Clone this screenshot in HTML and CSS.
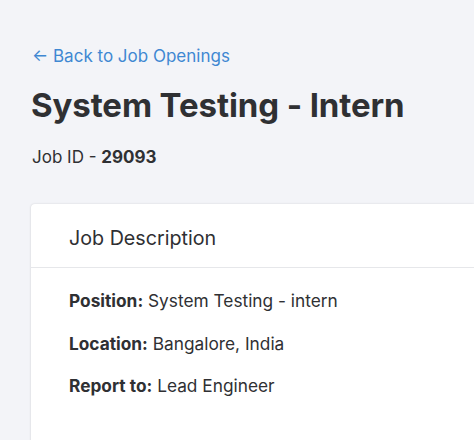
FILE: index.html
```html
<!DOCTYPE html>
<html>
<head>
<meta charset="utf-8">
<link rel="stylesheet" href="styles.css">
</head>
<body>
<main class="page">
  <a class="back" href="#">&larr; Back to Job Openings</a>
  <h1 class="title">System Testing - Intern</h1>
  <p class="jobid">Job ID - <strong>29093</strong></p>
  <section class="card">
    <div class="card-head">Job Description</div>
    <div class="card-body">
      <p class="row"><strong>Position:</strong> System Testing - intern</p>
      <p class="row"><strong>Location:</strong> Bangalore, India</p>
      <p class="row"><strong>Report to:</strong> Lead Engineer</p>
    </div>
  </section>
</main>
</body>
</html>
```
FILE: styles.css
```css
html, body {
  margin: 0;
  padding: 0;
}
body {
  background: #f3f4f8;
  font-family: Inter, "Liberation Sans", sans-serif;
  color: #2f3033;
}
.page {
  padding: 44px 0 0 31px;
}
.back {
  display: block;
  color: #3f88d2;
  text-decoration: none;
  font-size: 17px;
  line-height: 24px;
  padding-left: 1px;
}
.title {
  margin: 16px 0 0 0;
  font-size: 33px;
  line-height: 42px;
  font-weight: 700;
  letter-spacing: -0.1px;
}
.jobid {
  margin: 19px 0 0 1px;
  font-size: 17px;
  line-height: 24px;
}
.jobid strong {
  font-weight: 700;
}
.card {
  margin-top: 35px;
  background: #fff;
  border-radius: 4px 0 0 4px;
  box-shadow: -1px 0 2px rgba(0,0,0,0.06), 0 -1px 2px rgba(0,0,0,0.04);
}
.card-head {
  padding: 22px 38px 17px 38px;
  font-size: 19.7px;
  line-height: 24px;
  border-bottom: 1px solid #e6e7ea;
}
.card-body {
  padding: 21px 38px 40px 38px;
}
.row {
  margin: 0 0 18.5px 0;
  font-size: 17.3px;
  line-height: 24px;
}
.row strong {
  font-weight: 700;
}
```
